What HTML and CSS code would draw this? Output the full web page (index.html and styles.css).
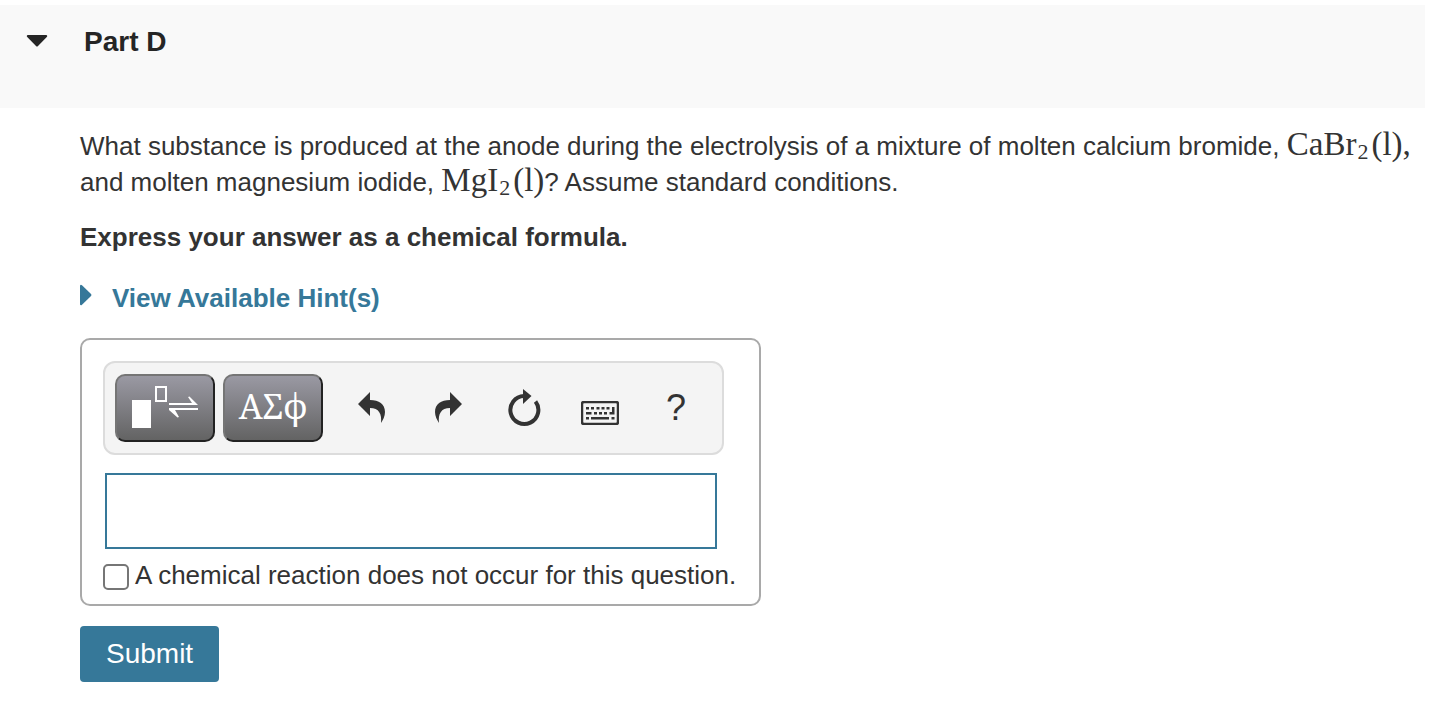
FILE: index.html
```
<!DOCTYPE html>
<html lang="en">
<head>
  <meta charset="UTF-8">
  <title>Part D</title>
  <meta name="viewport" content="width=device-width, initial-scale=1.0">
  <link rel="stylesheet" href="styles.css">
</head>
<body>
  <header class="part-header">
    <button class="toggle" type="button" aria-label="Collapse part">
      <svg width="22" height="12" viewBox="0 0 22 12"><path d="M1.5 0h19q1.5 .8 .3 2L12 11q-1 1-2 0L1.200 2Q0 .8 1.500 0z"/></svg>
    </button>
    <h2>Part D</h2>
  </header>

  <main class="part-body">
    <p class="question">What substance is produced at the anode during the electrolysis of a mixture of molten calcium bromide, <span class="math">CaBr<sub>2</sub>(l),</span> and molten magnesium iodide, <span class="math">MgI<sub>2</sub>(l)</span>? Assume standard conditions.</p>
    <p class="instructions">Express your answer as a chemical formula.</p>

    <a class="hints" href="#">
      <svg width="12" height="22" viewBox="0 0 12 22"><path d="M0 1.500Q.7 0 2 1.200L11 10q1 1 0 2L2 20.800Q.7 22 0 20.500z"/></svg>
      View Available Hint(s)
    </a>

    <form class="answer-form">
      <div class="answer-box">
        <div class="toolbar">
          <button class="palette" type="button" aria-label="Templates">
            <svg width="66" height="44" viewBox="0 0 66 44">
              <rect x="0" y="14" width="19" height="28" fill="#fff"/>
              <rect x="24" y="1" width="10" height="14" fill="none" stroke="#fff" stroke-width="2"/>
              <path d="M37 17h23l-4-6 1.500-.5 8.500 8.500H37z" fill="#fff"/>
              <path d="M66 24H43l4 7-1.500 .5L37 24v-2h29z" fill="#fff"/>
            </svg>
          </button>
          <button class="palette greek" type="button">ΑΣϕ</button>
          <div class="tools">
            <button type="button" aria-label="Undo">
              <svg width="28" height="32" viewBox="0 0 28 32"><path d="M0 12L12 0v8c9 0 15 4 15 12 0 4-2 8-4 11 1-9-2-15-11-15v8z"/></svg>
            </button>
            <button type="button" aria-label="Redo">
              <svg width="28" height="32" viewBox="0 0 28 32"><path d="M28 12L16 0v8C7 8 1 12 1 20c0 4 2 8 4 11-1-9 2-15 11-15v8z"/></svg>
            </button>
            <button type="button" aria-label="Reset">
              <svg width="34" height="38" viewBox="0 0 34 38"><path d="M28.500 12.500A14 14 0 1 1 17 7" fill="none" stroke="#333" stroke-width="4"/><path d="M16 0l8.500 7L16 15z"/></svg>
            </button>
            <button class="keyboard" type="button" aria-label="Keyboard shortcuts">
              <svg width="38" height="24" viewBox="0 0 38 24">
                <rect x="1" y="1" width="36" height="22" rx="2" fill="none" stroke="#333" stroke-width="2.500"/>
                <path d="M5 6h3v2.500H5zM10 6h3v2.500h-3zM15.500 6h3v2.500h-3zM20.500 6h3v2.500h-3zM25.500 6h3v2.500h-3zM31 6h2.500v7.500h-5V11H31zM5 11h5.500v2.500H5zM13 11h3v2.500h-3zM18 11h3v2.500h-3zM23 11h3v2.500h-3zM5 16h3v2.500H5zM10 16h18v2.500H10zM30.500 16h3v2.500h-3z"/>
              </svg>
            </button>
            <button class="help" type="button">?</button>
          </div>
        </div>
        <input class="answer" type="text" aria-label="Answer">
        <div class="no-reaction">
          <input type="checkbox" id="no-reaction">
          <label for="no-reaction">A chemical reaction does not occur for this question.</label>
        </div>
      </div>
      <button class="submit" type="button">Submit</button>
    </form>
  </main>
</body>
</html>
```
FILE: styles.css
```
* { box-sizing: border-box; }
body { margin: 0; font: 26px/36px "Liberation Sans", Arial, sans-serif; color: #333; background: #fff; }
p, h2 { margin: 0; }
button { font-family: inherit; color: inherit; padding: 0; border: 0; background: none; cursor: pointer; }
svg { display: block; fill: #333; }

.part-header { display: flex; align-items: flex-start; gap: 36px; margin: 5px 4px 0 0; padding: 19px 26px 48px; background: #f9f9f9; color: #252525; }
.part-header h2 { font-size: 28px; line-height: 36px; }
.toggle { display: flex; align-items: center; height: 34px; }
.toggle svg { fill: #252525; }

.part-body { padding: 20px 10px 24px 80px; }
.math { font-family: "Liberation Serif", serif; font-size: 33px; line-height: 1; white-space: nowrap; }
.math sub { margin: 0 3px 0 1px; font-size: 22px; line-height: 1; vertical-align: -4px; }
.instructions { margin-top: 19px; font-weight: bold; }
.hints { display: flex; align-items: center; gap: 20px; width: fit-content; margin-top: 25px; color: #367899; font-weight: bold; text-decoration: none; }
.hints svg { fill: #367899; margin-bottom: 6px; }

.answer-box { max-width: 681px; margin-top: 22px; padding: 21px; padding-bottom: 11px; border: 2px solid #a9a9a9; border-radius: 10px; }
.toolbar { display: flex; align-items: center; gap: 8px; margin-right: 14px; padding: 11px 10px; border: 2px solid #dcdcdc; border-radius: 12px; background: #f4f4f4; }
.palette { display: flex; flex: none; align-items: center; justify-content: center; width: 100px; height: 68px; border: 2px solid; border-color: #757575 #222 #222 #757575; border-radius: 10px; background: linear-gradient(#9a99a3, #636363); color: #fff; }
.greek { padding-bottom: 4px; font-family: "Noto Serif", "DejaVu Serif", "Liberation Serif", serif; font-size: 34px; }
.tools { display: flex; flex: none; margin-left: 3px; }
.tools button { display: flex; align-items: center; justify-content: center; width: 76px; height: 68px; }
.tools .keyboard { padding-top: 10px; }
.tools .help { font-size: 36px; }
.answer { display: block; width: calc(100% - 23px); height: 76px; margin: 18px 0 8px 2px; padding: 0 12px; border: 2px solid #367899; font: inherit; outline: 0; }
.no-reaction { display: flex; align-items: center; gap: 6px; white-space: nowrap; }
.no-reaction input { appearance: none; flex: none; width: 26px; height: 26px; margin: 4px 0 0; border: 2px solid #767676; border-radius: 5px; background: #fff; }
.no-reaction input:checked { background: #367899; }

.submit { margin-top: 20px; padding: 10px 26px; border-radius: 4px; background: #367899; color: #fff; font-size: 28px; line-height: 36px; }
```
